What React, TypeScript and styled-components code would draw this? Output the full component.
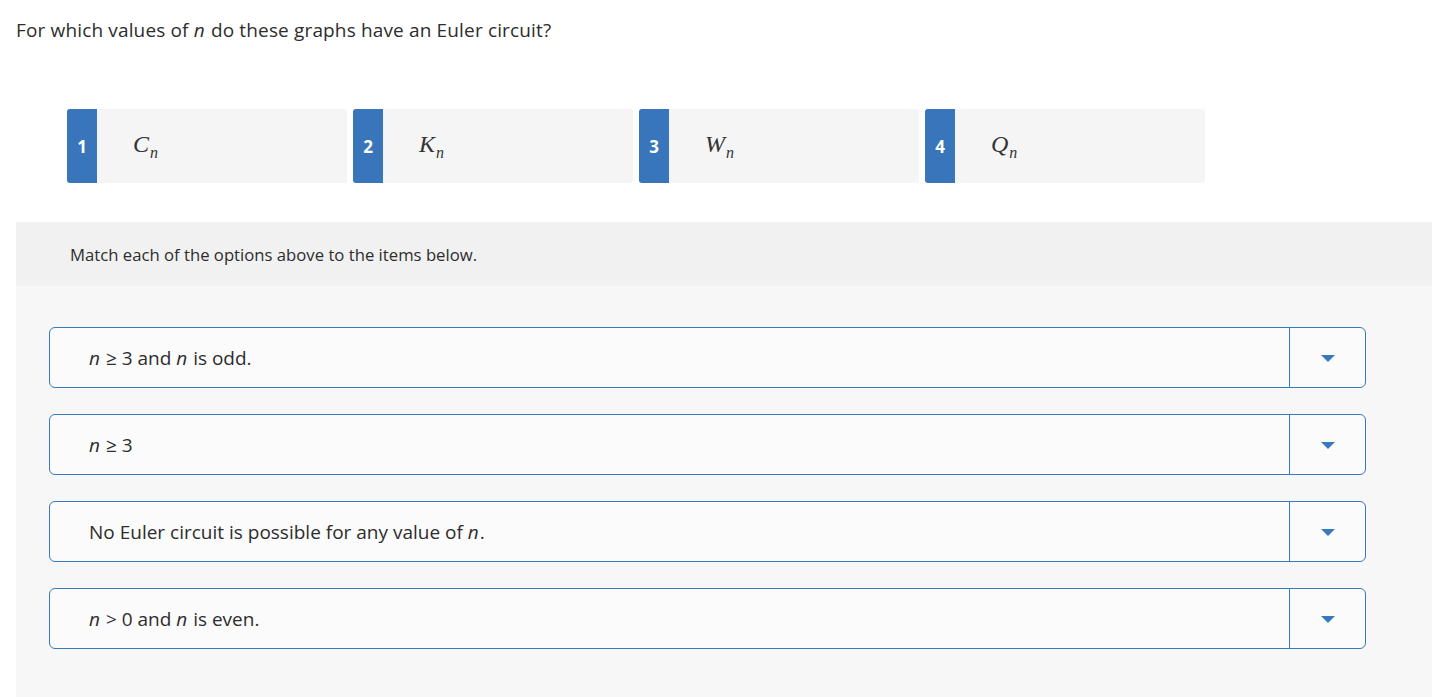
import React from 'react';
import styled, { createGlobalStyle } from 'styled-components';

const GlobalStyle = createGlobalStyle`
	html, body {
		margin: 0;
		padding: 0;
		background: #ffffff;
	}
	body {
		font-family: 'Open Sans', Lato, Arial, sans-serif;
		color: #333333;
	}
`;

const Var = styled.i`
	font-style: italic;
	margin-right: 1px;
`;

const options = [
	{ id: 1, symbol: 'C' },
	{ id: 2, symbol: 'K' },
	{ id: 3, symbol: 'W' },
	{ id: 4, symbol: 'Q' },
];

const App: React.FC = () => {
	const items: React.ReactNode[] = [
		<>
			<Var>n</Var> ≥ 3 and <Var>n</Var> is odd.
		</>,
		<>
			<Var>n</Var> ≥ 3
		</>,
		<>
			No Euler circuit is possible for any value of <Var>n</Var>.
		</>,
		<>
			<Var>n</Var> &gt; 0 and <Var>n</Var> is even.
		</>,
	];

	return (
		<Page>
			<GlobalStyle />
			<Question>
				For which values of <Var>n</Var> do these graphs have an Euler circuit?
			</Question>
			<Options>
				{options.map((opt) => (
					<OptionCard key={opt.id}>
						<Badge>{opt.id}</Badge>
						<MathLabel>
							{opt.symbol}
							<sub>n</sub>
						</MathLabel>
					</OptionCard>
				))}
			</Options>
			<Panel>
				<PanelHeader>Match each of the options above to the items below.</PanelHeader>
				<PanelBody>
					{items.map((content, i) => (
						<MatchRow key={i}>
							<RowText>
								<span>{content}</span>
							</RowText>
							<DropButton>
								<Caret />
							</DropButton>
						</MatchRow>
					))}
				</PanelBody>
			</Panel>
		</Page>
	);
};

const Page = styled.div`
	width: 1432px;
	min-height: 697px;
	overflow: hidden;
`;

const Question = styled.div`
	padding: 18px 16px 0 16px;
	font-size: 19px;
	letter-spacing: 0.15px;
	line-height: 24px;
	color: #2d2d2d;
`;

const Options = styled.div`
	display: flex;
	gap: 6px;
	margin: 67px 0 0 67px;
`;

const OptionCard = styled.div`
	width: 280px;
	height: 74px;
	display: flex;
	align-items: center;
	background: #f5f5f5;
	border-radius: 3px;
	overflow: hidden;
`;

const Badge = styled.div`
	width: 30px;
	height: 100%;
	display: flex;
	align-items: center;
	justify-content: center;
	background: #3875ba;
	color: #ffffff;
	font-family: 'Open Sans', Lato, sans-serif;
	font-weight: 700;
	font-size: 17px;
	flex-shrink: 0;
`;

const MathLabel = styled.span`
	margin-left: 36px;
	font-family: 'Liberation Serif', 'DejaVu Serif', serif;
	font-style: italic;
	font-size: 24px;
	color: #333333;

	& sub {
		font-size: 16px;
		vertical-align: -6px;
		margin-left: 1px;
	}
`;

const Panel = styled.div`
	margin: 39px 0 0 16px;
	background: #f7f7f7;
	min-height: 475px;
`;

const PanelHeader = styled.div`
	height: 64px;
	display: flex;
	align-items: center;
	padding-left: 54px;
	background: #f1f1f1;
	font-size: 16.7px;
	color: #2d2d2d;
`;

const PanelBody = styled.div`
	display: flex;
	flex-direction: column;
	gap: 26px;
	padding: 41px 0 0 33px;
	width: 1317px;
`;

const MatchRow = styled.div`
	height: 59px;
	display: flex;
	border: 1px solid #3a78bf;
	border-radius: 6px;
	background: #fbfbfb;
`;

const RowText = styled.div`
	flex: 1;
	display: flex;
	align-items: center;
	padding-left: 39px;
	font-size: 19px;
	color: #2d2d2d;
	border-right: 1px solid #3a78bf;
`;

const DropButton = styled.div`
	width: 75px;
	display: flex;
	align-items: center;
	justify-content: center;
`;

const Caret = styled.span`
	width: 0;
	height: 0;
	border-left: 7.5px solid transparent;
	border-right: 7.5px solid transparent;
	border-top: 7.5px solid #3a78bf;
	margin-top: 2px;
`;

export default App;
